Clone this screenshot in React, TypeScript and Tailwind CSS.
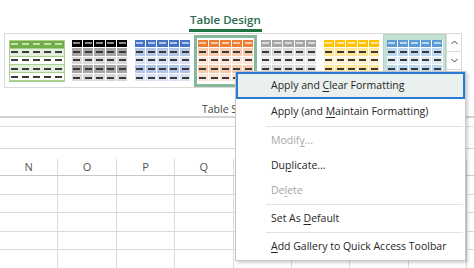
import React from "react";

type Style = {
  grid: string;
  head: string;
  headDash: string;
  a: string;
  b: string;
};

const styles: Style[] = [
  {
    grid: "gap-y-px border border-[#a9d08e] bg-[#a9d08e]",
    head: "bg-[#70ad47]",
    headDash: "bg-[#c6e0b4]",
    a: "bg-[#e2efda]",
    b: "bg-white",
  },
  {
    grid: "gap-px bg-white",
    head: "bg-black",
    headDash: "bg-[#8a8a8a]",
    a: "bg-[#a6a6a6]",
    b: "bg-[#d9d9d9]",
  },
  {
    grid: "gap-px bg-white",
    head: "bg-[#4472c4]",
    headDash: "bg-[#b4c6e7]",
    a: "bg-[#b4c6e7]",
    b: "bg-[#d9e1f2]",
  },
  {
    grid: "gap-px bg-white",
    head: "bg-[#ed7d31]",
    headDash: "bg-[#f8cbad]",
    a: "bg-[#f8cbad]",
    b: "bg-[#fce4d6]",
  },
  {
    grid: "gap-px bg-white",
    head: "bg-[#a5a5a5]",
    headDash: "bg-[#dbdbdb]",
    a: "bg-[#dbdbdb]",
    b: "bg-[#ededed]",
  },
  {
    grid: "gap-px bg-white",
    head: "bg-[#ffc000]",
    headDash: "bg-[#ffe699]",
    a: "bg-[#ffe699]",
    b: "bg-[#fff2cc]",
  },
  {
    grid: "gap-px bg-white",
    head: "bg-[#5b9bd5]",
    headDash: "bg-[#bdd7ee]",
    a: "bg-[#bdd7ee]",
    b: "bg-[#ddebf7]",
  },
];

function Thumb({ s }: { s: Style }) {
  const rows = [s.head, s.a, s.b, s.a, s.b];
  return (
    <div className={`grid h-[42px] w-[56px] grid-cols-5 grid-rows-5 ${s.grid}`}>
      {rows.flatMap((bg, r) =>
        [0, 1, 2, 3, 4].map((c) => (
          <div key={`${r}-${c}`} className={`flex items-center justify-center ${bg}`}>
            <div className={`h-[2px] w-[7px] ${r === 0 ? s.headDash : "bg-[#3a3a3a]"}`} />
          </div>
        ))
      )}
    </div>
  );
}

function Chevron({ up }: { up?: boolean }) {
  return (
    <svg width="7" height="5" viewBox="0 0 7 5">
      <polyline
        points={up ? "0.5,4 3.5,1 6.5,4" : "0.5,1 3.5,4 6.5,1"}
        fill="none"
        stroke="#444"
        strokeWidth="1"
      />
    </svg>
  );
}

function Item({
  before,
  u,
  after,
  disabled,
  h,
  active,
}: {
  before: string;
  u: string;
  after: string;
  disabled?: boolean;
  h: string;
  active?: boolean;
}) {
  return (
    <div
      className={`flex items-center ${active ? "pl-[33px]" : "pl-[35px]"} ${h} ${
        active ? "border-2 border-[#2b7bd6] bg-[#e9f0ee]" : ""
      } ${disabled ? "text-[#a6a6a6]" : "text-[#262626]"}`}
    >
      <span>
        {before}
        <span className="underline underline-offset-2">{u}</span>
        {after}
      </span>
    </div>
  );
}

function Sep() {
  return (
    <div className="flex h-[3px] items-center pl-[30px] pr-[2px]">
      <div className="h-px w-full bg-[#e1e1e1]" />
    </div>
  );
}

const cols = ["N", "O", "P", "Q", "", "", "", "", ""];

export default function App() {
  return (
    <div
      className="relative h-[268px] w-[474px] overflow-hidden bg-white"
      style={{ fontFamily: '"Open Sans", "Noto Sans", sans-serif' }}
    >
      {/* ribbon tab title */}
      <div className="h-[33px] pl-[189px] pt-[6px]">
        <div className="inline-block border-b-[3px] border-[#217346] px-px pb-[1px] text-[11.5px] font-semibold leading-[17px] text-[#2b6a4c]">
          Table Design
        </div>
      </div>

      {/* style gallery */}
      <div className="ml-1 flex h-[55px] w-[458px] border border-[#dadada]">
        <div className="flex">
          {styles.map((s, i) => (
            <div
              key={i}
              className={`flex w-[63px] items-center justify-center ${
                i === 6 ? "border border-[#aed4c3] bg-[#c4e1d4]" : ""
              }`}
            >
              {i === 3 ? (
                <div className="flex h-[52px] w-[63px] items-center justify-center border-[3px] border-[#86b89c] bg-white">
                  <Thumb s={s} />
                </div>
              ) : (
                <Thumb s={s} />
              )}
            </div>
          ))}
        </div>
        <div className="flex w-[15px] flex-col border-l border-[#dadada]">
          <div className="flex h-[18px] items-center justify-center border-b border-[#dadada]">
            <Chevron up />
          </div>
          <div className="flex h-[18px] items-center justify-center border-b border-[#dadada]">
            <Chevron />
          </div>
          <div className="flex-1" />
        </div>
      </div>

      {/* group label */}
      <div className="flex h-[28px] items-end pl-[202px] text-[10.5px] leading-[14px] text-[#444]">
        Table Styles
      </div>
      <div className="h-[2px] bg-[#d4d4d4]" />
      <div className="h-[8px]" />
      <div className="h-px bg-[#dedede]" />
      <div className="h-[21px]" />
      <div className="h-px bg-[#d6d6d6]" />
      <div className="h-[10px]" />

      {/* sheet grid */}
      <div className="flex h-[17px] border-b border-[#c8c8c8]">
        {cols.map((c, i) => (
          <div
            key={i}
            className="flex w-[58.4px] shrink-0 items-end justify-center border-r border-[#dadada] pb-px text-[11px] leading-[14px] text-[#555]"
          >
            {c}
          </div>
        ))}
      </div>
      {[0, 1, 2, 3, 4].map((r) => (
        <div key={r} className="flex h-[18.5px] border-b border-[#dadada]">
          {cols.map((c, i) => (
            <div key={i} className="w-[58.4px] shrink-0 border-r border-[#dadada]" />
          ))}
        </div>
      ))}

      {/* context menu */}
      <div className="absolute left-[235px] top-[71px] w-[231px] border border-[#c6c6c6] bg-white text-[10.5px] shadow-[2px_2px_3px_rgba(0,0,0,0.18)]">
        <Item before="Apply and " u="C" after="lear Formatting" h="h-[27px]" active />
        <Item before="Apply (and " u="M" after="aintain Formatting)" h="h-[26px]" />
        <Sep />
        <Item before="Modif" u="y" after="..." h="h-[25px]" disabled />
        <Item before="Du" u="p" after="licate..." h="h-[25px]" />
        <Item before="De" u="l" after="ete" h="h-[25px]" disabled />
        <Sep />
        <Item before="Set As " u="D" after="efault" h="h-[25px]" />
        <Sep />
        <Item before="" u="A" after="dd Gallery to Quick Access Toolbar" h="h-[26px]" />
      </div>
    </div>
  );
}
